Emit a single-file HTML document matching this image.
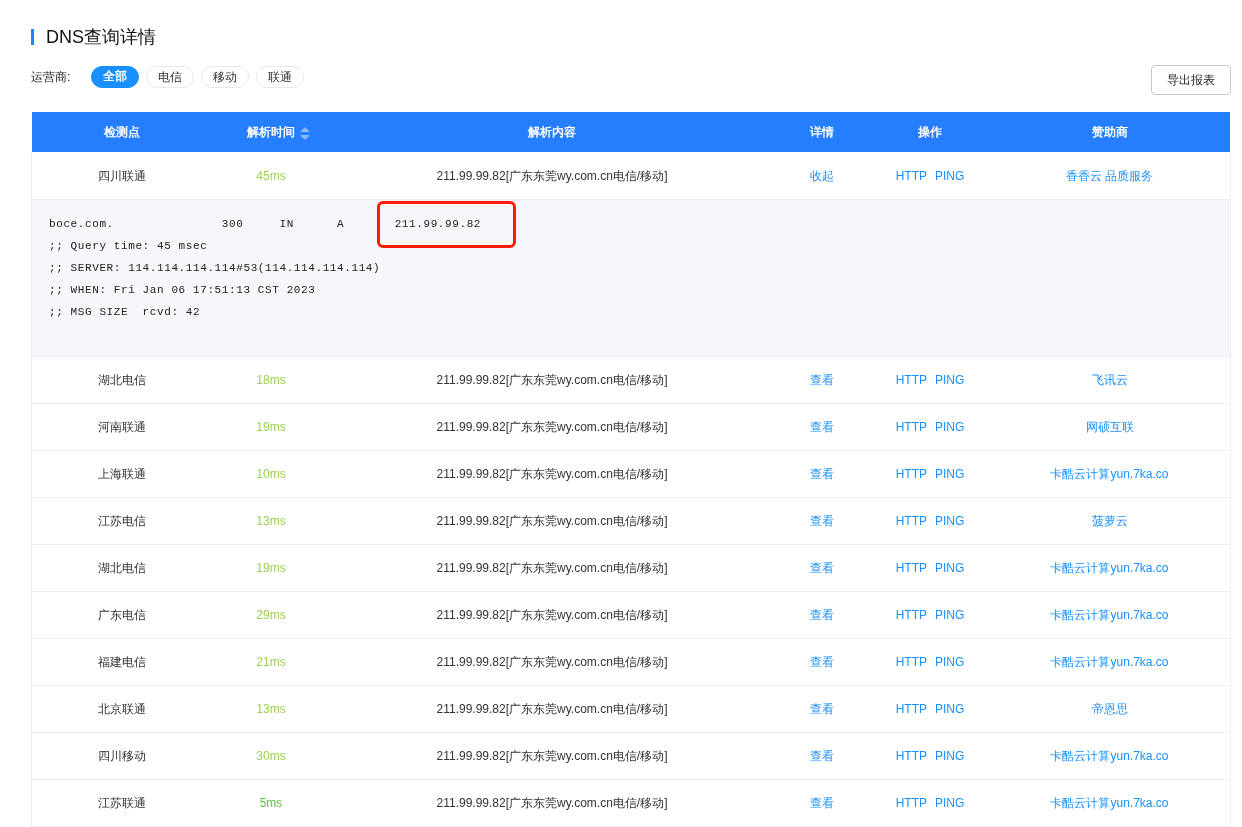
<!DOCTYPE html>
<html><head><meta charset="utf-8"><style>
*{margin:0;padding:0;box-sizing:border-box}
html,body{width:1242px;height:827px;overflow:hidden;background:#fff}
.wrap{position:absolute;left:0;top:0;width:1242px;height:827px;will-change:transform}
body{position:relative;font-family:"Liberation Sans",sans-serif;font-size:12px;color:#333}
.bar{position:absolute;left:31px;top:29px;width:3px;height:16px;background:#1787ff}
.title{position:absolute;left:46px;top:25px;font-size:18px;line-height:24px;color:#111}
.lbl{position:absolute;left:31px;top:69px;line-height:16px;color:#222}
.pill{position:absolute;top:66px;width:48px;height:22px;border:1px solid #e8e8e8;border-radius:11px;text-align:center;line-height:20px;color:#333}
.pill.on{background:#1890ff;border-color:#1890ff;color:#fff;font-weight:600;line-height:19px}
.btn{position:absolute;left:1151px;top:65px;width:80px;height:30px;border:1px solid #c6c8cc;border-radius:4px;text-align:center;line-height:28px;color:#222}
.tb{position:absolute;left:31px;top:152px;width:1200px;height:675px;border-left:1px solid #eceef1;border-right:1px solid #eceef1}
.head{position:absolute;left:32px;top:112px;width:1198px;height:40px;background:#257eff;color:#fff;font-weight:600}
.head .c{line-height:40px}
.c{position:absolute;top:0;text-align:center;white-space:nowrap}
.c1{left:0;width:179px}.c2{left:179px;width:120px}.c3{left:299px;width:442px}.c4{left:742px;width:96px}.c5{left:838px;width:120px}.c6{left:957px;width:241px}
.row{position:absolute;left:32px;width:1198px;border-bottom:1px solid #eceef1}
.row .c{line-height:inherit}
.lk{color:#1890ff}
.pg{margin-left:8px}
.sort{position:absolute;left:268px;top:15px;width:10px;height:13px}
.panel{position:absolute;left:32px;top:200px;width:1198px;height:157px;background:#f5f7fa;border-bottom:1px solid #eceef1}
pre{position:absolute;left:17px;top:13px;font-family:"Liberation Mono",monospace;font-size:11px;letter-spacing:0.6px;line-height:22px;color:#222;tab-size:8}
.red{position:absolute;left:345px;top:1px;width:139px;height:47px;border:3px solid #fc1c05;border-radius:6px}
</style></head><body><div class="wrap">
<div class="bar"></div>
<div class="title">DNS查询详情</div>
<div class="lbl">运营商:</div>
<div class="pill on" style="left:91px">全部</div>
<div class="pill" style="left:146px">电信</div>
<div class="pill" style="left:201px">移动</div>
<div class="pill" style="left:256px">联通</div>
<div class="btn">导出报表</div>
<div class="tb"></div>
<div class="head">
<div class="c c1">检测点</div><div class="c c2">解析时间</div>
<svg class="sort" viewBox="0 0 10 13"><path d="M5 0 L10 5 H0Z M5 13 L10 8 H0Z" fill="#8ab8fc"/></svg>
<div class="c c3">解析内容</div><div class="c c4">详情</div><div class="c c5">操作</div><div class="c c6">赞助商</div>
</div>
<div class="row"  style="top:152px;height:48px;line-height:49px">
<div class="c c1">四川联通</div><div class="c c2" style="color:#9ccf56">45ms</div><div class="c c3">211.99.99.82[广东东莞wy.com.cn电信/移动]</div><div class="c c4 lk">收起</div><div class="c c5 lk"><span>HTTP</span><span class="pg">PING</span></div><div class="c c6 lk">香香云 品质服务</div>
</div><div class="panel"><pre>boce.com.		300	IN	A	211.99.99.82
;; Query time: 45 msec
;; SERVER: 114.114.114.114#53(114.114.114.114)
;; WHEN: Fri Jan 06 17:51:13 CST 2023
;; MSG SIZE  rcvd: 42</pre><div class="red"></div></div>
<div class="row" style="top:357px;height:47px;line-height:46px">
<div class="c c1">湖北电信</div><div class="c c2" style="color:#9ccf56">18ms</div><div class="c c3">211.99.99.82[广东东莞wy.com.cn电信/移动]</div><div class="c c4 lk">查看</div><div class="c c5 lk"><span>HTTP</span><span class="pg">PING</span></div><div class="c c6 lk">飞讯云</div>
</div><div class="row" style="top:404px;height:47px;line-height:46px">
<div class="c c1">河南联通</div><div class="c c2" style="color:#9ccf56">19ms</div><div class="c c3">211.99.99.82[广东东莞wy.com.cn电信/移动]</div><div class="c c4 lk">查看</div><div class="c c5 lk"><span>HTTP</span><span class="pg">PING</span></div><div class="c c6 lk">网硕互联</div>
</div><div class="row" style="top:451px;height:47px;line-height:46px">
<div class="c c1">上海联通</div><div class="c c2" style="color:#9ccf56">10ms</div><div class="c c3">211.99.99.82[广东东莞wy.com.cn电信/移动]</div><div class="c c4 lk">查看</div><div class="c c5 lk"><span>HTTP</span><span class="pg">PING</span></div><div class="c c6 lk">卡酷云计算yun.7ka.co</div>
</div><div class="row" style="top:498px;height:47px;line-height:46px">
<div class="c c1">江苏电信</div><div class="c c2" style="color:#9ccf56">13ms</div><div class="c c3">211.99.99.82[广东东莞wy.com.cn电信/移动]</div><div class="c c4 lk">查看</div><div class="c c5 lk"><span>HTTP</span><span class="pg">PING</span></div><div class="c c6 lk">菠萝云</div>
</div><div class="row" style="top:545px;height:47px;line-height:46px">
<div class="c c1">湖北电信</div><div class="c c2" style="color:#9ccf56">19ms</div><div class="c c3">211.99.99.82[广东东莞wy.com.cn电信/移动]</div><div class="c c4 lk">查看</div><div class="c c5 lk"><span>HTTP</span><span class="pg">PING</span></div><div class="c c6 lk">卡酷云计算yun.7ka.co</div>
</div><div class="row" style="top:592px;height:47px;line-height:46px">
<div class="c c1">广东电信</div><div class="c c2" style="color:#9ccf56">29ms</div><div class="c c3">211.99.99.82[广东东莞wy.com.cn电信/移动]</div><div class="c c4 lk">查看</div><div class="c c5 lk"><span>HTTP</span><span class="pg">PING</span></div><div class="c c6 lk">卡酷云计算yun.7ka.co</div>
</div><div class="row" style="top:639px;height:47px;line-height:46px">
<div class="c c1">福建电信</div><div class="c c2" style="color:#9ccf56">21ms</div><div class="c c3">211.99.99.82[广东东莞wy.com.cn电信/移动]</div><div class="c c4 lk">查看</div><div class="c c5 lk"><span>HTTP</span><span class="pg">PING</span></div><div class="c c6 lk">卡酷云计算yun.7ka.co</div>
</div><div class="row" style="top:686px;height:47px;line-height:46px">
<div class="c c1">北京联通</div><div class="c c2" style="color:#9ccf56">13ms</div><div class="c c3">211.99.99.82[广东东莞wy.com.cn电信/移动]</div><div class="c c4 lk">查看</div><div class="c c5 lk"><span>HTTP</span><span class="pg">PING</span></div><div class="c c6 lk">帝恩思</div>
</div><div class="row" style="top:733px;height:47px;line-height:46px">
<div class="c c1">四川移动</div><div class="c c2" style="color:#9ccf56">30ms</div><div class="c c3">211.99.99.82[广东东莞wy.com.cn电信/移动]</div><div class="c c4 lk">查看</div><div class="c c5 lk"><span>HTTP</span><span class="pg">PING</span></div><div class="c c6 lk">卡酷云计算yun.7ka.co</div>
</div><div class="row" style="top:780px;height:47px;line-height:46px">
<div class="c c1">江苏联通</div><div class="c c2" style="color:#5ec64a">5ms</div><div class="c c3">211.99.99.82[广东东莞wy.com.cn电信/移动]</div><div class="c c4 lk">查看</div><div class="c c5 lk"><span>HTTP</span><span class="pg">PING</span></div><div class="c c6 lk">卡酷云计算yun.7ka.co</div>
</div></div></body></html>
